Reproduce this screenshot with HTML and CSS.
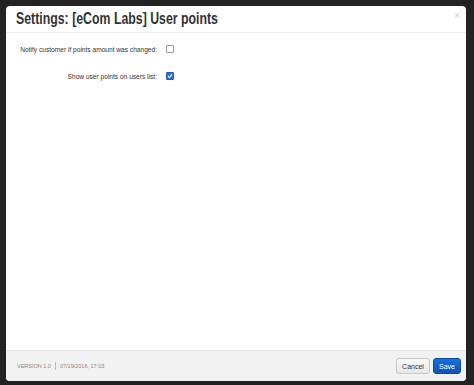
FILE: index.html
```html
<!DOCTYPE html>
<html>
<head>
<meta charset="utf-8">
<link rel="stylesheet" href="styles.css">
</head>
<body>
<div class="modal">
  <div class="modal-header">
    <h1 class="title">Settings: [eCom Labs] User points</h1>
    <span class="close">×</span>
  </div>
  <div class="modal-body">
    <div class="row">
      <label class="label">Notify customer if points amount was changed:</label>
      <span class="check"></span>
    </div>
    <div class="row">
      <label class="label">Show user points on users list:</label>
      <span class="check checked"><svg viewBox="0 0 8 8" width="6" height="6"><path d="M1.3 4.2 L3.2 6 L6.8 1.8" fill="none" stroke="#fff" stroke-width="1.4"/></svg></span>
    </div>
  </div>
  <div class="modal-footer">
    <div class="version"><span>VERSION 1.0</span><span class="sep"></span><span>07/19/2016, 17:03</span></div>
    <div class="buttons">
      <button class="btn btn-cancel">Cancel</button>
      <button class="btn btn-save">Save</button>
    </div>
  </div>
</div>
</body>
</html>
```
FILE: styles.css
```css
html, body { margin: 0; padding: 0; }
body {
  background: #232323;
  width: 474px;
  height: 385px;
  font-family: "Liberation Sans", Arial, sans-serif;
  display: flex;
  flex-direction: column;
}
.modal {
  margin: 6px 8px 4px 6px;
  flex: 1;
  background: #fff;
  border-radius: 4px;
  display: flex;
  flex-direction: column;
  overflow: hidden;
}
.modal-header {
  height: 26px;
  border-bottom: 1px solid #eee;
  display: flex;
  align-items: center;
  justify-content: space-between;
  padding: 0 6px 0 10px;
}
.title {
  margin: 0;
  font-size: 16px;
  font-weight: bold;
  color: #333;
  white-space: nowrap;
  transform: scaleX(0.77);
  transform-origin: left center;
}
.close {
  color: #ccc;
  font-size: 10px;
  align-self: flex-start;
  margin-top: 4px;
}
.modal-body {
  flex: 1;
  padding-top: 9px;
}
.row {
  display: flex;
  align-items: center;
  height: 14px;
  margin-bottom: 13px;
}
.label {
  width: 151px;
  text-align: right;
  font-size: 6.6px;
  color: #333;
  white-space: nowrap;
}
.check {
  margin-left: 9px;
  width: 6px;
  height: 6px;
  border: 1px solid #999;
  border-radius: 1px;
  display: flex;
  align-items: center;
  justify-content: center;
  background: #fff;
}
.check.checked {
  background: #2a72d8;
  border-color: #1f5fbf;
}
.modal-footer {
  height: 30px;
  border-top: 1px solid #e2e2e2;
  background: #f2f2f2;
  display: flex;
  align-items: center;
  justify-content: space-between;
  padding: 0 5px 0 11px;
}
.version {
  font-size: 5.5px;
  color: #888;
  display: flex;
  align-items: center;
}
.sep {
  width: 1px;
  height: 8px;
  background: #bbb;
  margin: 0 4px;
}
.buttons { display: flex; gap: 3px; }
.btn {
  font-family: "Liberation Sans", Arial, sans-serif;
  font-size: 7px;
  height: 16px;
  border-radius: 3px;
  padding: 0;
  cursor: pointer;
}
.btn-cancel {
  width: 34px;
  background: linear-gradient(#fafafa, #e6e6e6);
  border: 1px solid #c8c8c8;
  color: #333;
}
.btn-save {
  width: 28px;
  background: linear-gradient(#1a6fd9, #0d55b8);
  border: 1px solid #0a4aa6;
  color: #fff;
}
```
